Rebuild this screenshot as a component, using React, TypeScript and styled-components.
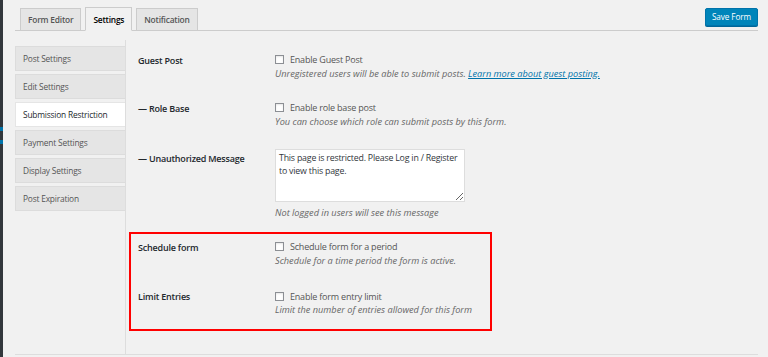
import React from 'react';
import styled, { createGlobalStyle } from 'styled-components';

const Global = createGlobalStyle`
  html, body { margin: 0; padding: 0; background: #f1f1f1; }
  body {
    font-family: "Open Sans", "Noto Sans", Arial, sans-serif;
    font-size: 9px;
    letter-spacing: -0.2px;
    color: #444;
  }
  #root { height: 357px; overflow: hidden; }
  * { box-sizing: border-box; }
`;

const Page = styled.div`
  display: flex;
  height: 357px;
`;

const AdminStrip = styled.div`
  width: 3px;
  flex-shrink: 0;
  background: #32373c;
  display: flex;
  flex-direction: column;
`;

const StripMark = styled.div<{ $top: number }>`
  margin-top: ${(p) => p.$top}px;
  height: 4px;
  background: #0073aa;
`;

const Main = styled.div`
  flex: 1;
  padding: 0 10px 0 12px;
  display: flex;
  flex-direction: column;
`;

const Header = styled.div`
  display: flex;
  align-items: flex-end;
  height: 31px;
  border-bottom: 1px solid #ccc;
  padding-left: 5px;
`;

const Tab = styled.div<{ $active?: boolean }>`
  height: ${(p) => (p.$active ? 24 : 22)}px;
  margin-bottom: ${(p) => (p.$active ? -1 : 0)}px;
  margin-right: 4px;
  padding: 0 7px;
  border: 1px solid #ccc;
  border-bottom: ${(p) => (p.$active ? '1px solid #f1f1f1' : 'none')};
  background: ${(p) => (p.$active ? '#f1f1f1' : '#e5e5e5')};
  color: ${(p) => (p.$active ? '#000' : '#555')};
  font-weight: 600;
  font-size: 8.4px;
  display: flex;
  align-items: center;
`;

const SaveButton = styled.button`
  margin-left: auto;
  align-self: flex-start;
  margin-top: 8px;
  height: 18px;
  padding: 0 6px;
  background: #0085ba;
  border: 1px solid #0073aa;
  border-radius: 2px;
  box-shadow: 0 1px 0 #006799;
  color: #fff;
  font-family: "Open Sans", "Noto Sans", Arial, sans-serif;
  font-size: 8.2px;
  letter-spacing: -0.1px;
  line-height: 16px;
`;

const Body = styled.div`
  display: flex;
  margin-top: 9px;
  height: 315px;
  border-bottom: 1px solid #ddd;
`;

const Sidebar = styled.div`
  width: 110px;
  flex-shrink: 0;
  padding-top: 6px;
  display: flex;
  flex-direction: column;
  gap: 3px;
`;

const SideItem = styled.div<{ $active?: boolean }>`
  height: 25px;
  padding-left: 7px;
  display: flex;
  align-items: center;
  border: 1px solid ${(p) => (p.$active ? '#e5e5e5' : '#dcdcdc')};
  border-right: none;
  background: ${(p) => (p.$active ? '#fff' : '#e5e5e5')};
  color: ${(p) => (p.$active ? '#23282d' : '#555')};
  font-size: 8.4px;
  white-space: nowrap;
`;

const Content = styled.div`
  flex: 1;
  border-left: 1px solid #ddd;
  padding-top: 2.5px;
  display: flex;
  flex-direction: column;
`;

const Row = styled.div<{ $pad?: string; $indent?: number }>`
  display: flex;
  padding: ${(p) => p.$pad ?? '10px 0'};
  padding-left: ${(p) => p.$indent ?? 12}px;
`;

const Label = styled.div<{ $offset?: number }>`
  width: 137px;
  flex-shrink: 0;
  padding-top: ${(p) => p.$offset ?? 1}px;
  line-height: 14px;
  font-weight: 600;
  font-size: 9px;
  color: #23282d;
`;

const Field = styled.div`
  display: flex;
  flex-direction: column;
`;

const CheckLine = styled.label`
  display: flex;
  align-items: center;
  gap: 6px;
  height: 14px;
  font-size: 9px;
  color: #555;
`;

const Check = styled.input`
  appearance: none;
  -webkit-appearance: none;
  margin: 0;
  width: 9px;
  height: 9px;
  border: 1px solid #8c8f94;
  background: #fff;
  box-shadow: inset 0 1px 2px rgba(0, 0, 0, 0.1);
`;

const Description = styled.div<{ $gap?: number }>`
  margin-top: ${(p) => p.$gap ?? 0}px;
  line-height: 14px;
  font-style: italic;
  font-size: 9.2px;
  letter-spacing: 0;
  color: #666;
`;

const Link = styled.a`
  color: #0073aa;
  text-decoration: underline;
`;

const MessageBox = styled.textarea`
  width: 190px;
  height: 53px;
  border: 1px solid #ddd;
  padding: 2px 4px 2px 3px;
  background: #fff;
  overflow: hidden;
  font-family: "Open Sans", "Noto Sans", Arial, sans-serif;
  font-size: 8.8px;
  letter-spacing: -0.2px;
  line-height: 13.5px;
  color: #32373c;
  outline: none;
`;

const Highlight = styled.div`
  margin: 2px 0 0 3px;
  width: 363px;
  border: 2px solid #ff0000;
  padding: 6px 0 12px;
  display: flex;
  flex-direction: column;
  gap: 21.5px;
`;

const sideItems = [
  'Post Settings',
  'Edit Settings',
  'Submission Restriction',
  'Payment Settings',
  'Display Settings',
  'Post Expiration',
];

export default function App() {
  return (
    <>
      <Global />
      <Page>
        <AdminStrip>
          <StripMark $top={127} />
          <StripMark $top={9} />
        </AdminStrip>
        <Main>
          <Header>
            <Tab>Form Editor</Tab>
            <Tab $active>Settings</Tab>
            <Tab>Notification</Tab>
            <SaveButton>Save Form</SaveButton>
          </Header>
          <Body>
            <Sidebar>
              {sideItems.map((s) => (
                <SideItem key={s} $active={s === 'Submission Restriction'}>
                  {s}
                </SideItem>
              ))}
            </Sidebar>
            <Content>
              <Row>
                <Label>Guest Post</Label>
                <Field>
                  <CheckLine>
                    <Check type="checkbox" />
                    Enable Guest Post
                  </CheckLine>
                  <Description>
                    Unregistered users will be able to submit posts.{' '}
                    <Link href="#">Learn more about guest posting.</Link>
                  </Description>
                </Field>
              </Row>
              <Row>
                <Label>— Role Base</Label>
                <Field>
                  <CheckLine>
                    <Check type="checkbox" />
                    Enable role base post
                  </CheckLine>
                  <Description>You can choose which role can submit posts by this form.</Description>
                </Field>
              </Row>
              <Row>
                <Label $offset={3}>— Unauthorized Message</Label>
                <Field>
                  <MessageBox defaultValue="This page is restricted. Please Log in / Register to view this page." />
                  <Description $gap={4}>Not logged in users will see this message</Description>
                </Field>
              </Row>
              <Highlight>
                <Row $pad="0" $indent={7}>
                  <Label>Schedule form</Label>
                  <Field>
                    <CheckLine>
                      <Check type="checkbox" />
                      Schedule form for a period
                    </CheckLine>
                    <Description>Schedule for a time period the form is active.</Description>
                  </Field>
                </Row>
                <Row $pad="0" $indent={7}>
                  <Label>Limit Entries</Label>
                  <Field>
                    <CheckLine>
                      <Check type="checkbox" />
                      Enable form entry limit
                    </CheckLine>
                    <Description>Limit the number of entries allowed for this form</Description>
                  </Field>
                </Row>
              </Highlight>
            </Content>
          </Body>
        </Main>
      </Page>
    </>
  );
}
